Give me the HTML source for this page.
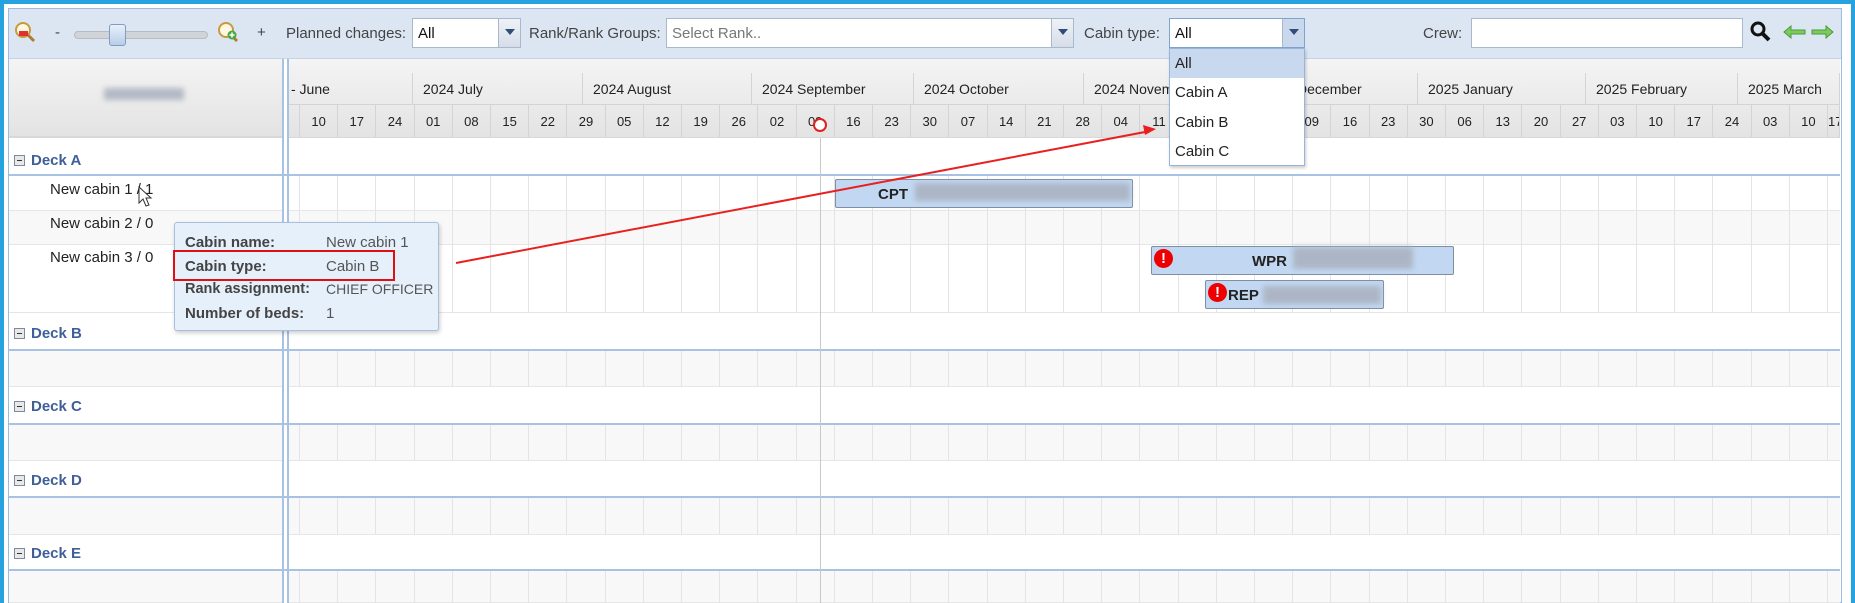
<!DOCTYPE html>
<html><head><meta charset="utf-8">
<style>
*{box-sizing:border-box;margin:0;padding:0}
body{width:1855px;height:603px;overflow:hidden;background:#fff;font-family:"Liberation Sans",sans-serif;font-size:14px;color:#333;position:relative}
.a{position:absolute}
#tb{left:9px;top:9px;width:1832px;height:50px;background:#dce6f3;border-bottom:1px solid #c5d3e6}
.lbl{position:absolute;top:25px;font-size:15px;color:#444}
.sel{position:absolute;height:30px;background:#fff;border:1px solid #a9b8cc}
.sel .arr{position:absolute;right:0;top:0;width:22px;height:100%;background:linear-gradient(#eef2f7,#d7dee8);border-left:1px solid #a9b8cc}
.sel .arr:after{content:"";position:absolute;left:6px;top:10px;border:5px solid transparent;border-top:6px solid #2e4d7b}
.sel span{position:absolute;left:5px;top:6px;font-size:15px;color:#111}
.hdr{background:linear-gradient(#f4f4f4,#e3e3e3)}
.cell{position:absolute;border-right:1px solid #d4d4d4;text-align:center;font-size:13px;color:#222}
.deck{position:absolute;left:9px;width:273px;font-weight:bold;color:#3e5f98;font-size:15px}
.deck i{display:inline-block;width:11px;height:11px;border:1px solid #7a8aa0;background:#e8e8e8;margin:0 6px 0 5px;vertical-align:-1px;position:relative}
.deck i:after{content:"";position:absolute;left:2px;top:4px;width:5px;height:1px;background:#333}
.bl{position:absolute;left:9px;width:1831px;height:2px;background:#a8c2e4}
.bar{position:absolute;background:#c2d8f2;border:1px solid #7f8fa3;border-radius:2px;font-weight:bold;font-size:15px;color:#222}
.blur{position:absolute;background:#a8b0be;filter:blur(3px);opacity:.85}
.ex{position:absolute;width:19px;height:19px;border-radius:50%;background:#e00;color:#fff;font-weight:bold;text-align:center;line-height:19px;font-size:15px}
.cab{position:absolute;left:50px;font-size:15px;color:#222}
.tt{position:absolute;font-size:15px;white-space:nowrap}
</style></head><body>
<div class="a" style="left:0;top:0;width:1855px;height:4px;background:#27a2e0"></div>
<div class="a" style="left:0;top:0;width:4px;height:603px;background:#27a2e0"></div>
<div class="a" style="left:1851px;top:0;width:4px;height:603px;background:#27a2e0"></div>
<div class="a" style="left:8px;top:8px;width:1834px;height:595px;border:1px solid #9bbbe0"></div>

<div id="tb" class="a"></div>
<svg class="a" style="left:14px;top:21px" width="24" height="24"><circle cx="9" cy="9" r="7" fill="#fff8e0" stroke="#c89a40" stroke-width="2"/><line x1="14" y1="14" x2="20" y2="20" stroke="#b07a30" stroke-width="3"/><rect x="5" y="10" width="9" height="5" fill="#e03030"/></svg>
<div class="lbl" style="left:55px;top:24px">-</div>
<div class="a" style="left:74px;top:31px;width:134px;height:8px;border-radius:4px;background:#d0d4d8;border:1px solid #b8bcc2"></div>
<div class="a" style="left:109px;top:24px;width:17px;height:22px;border-radius:3px;background:linear-gradient(#e8f0fb,#b9cde8);border:1px solid #7f9cc4"></div>
<svg class="a" style="left:217px;top:21px" width="24" height="24"><circle cx="9" cy="9" r="7" fill="#fff8e0" stroke="#c89a40" stroke-width="2"/><line x1="14" y1="14" x2="20" y2="20" stroke="#b07a30" stroke-width="3"/><circle cx="15" cy="14" r="4.5" fill="#4aa84a"/><path d="M12.5 14h5M15 11.5v5" stroke="#fff" stroke-width="1.5"/></svg>
<div class="lbl" style="left:257px;top:24px">+</div>
<div class="lbl" style="left:286px">Planned changes:</div>
<div class="sel" style="left:412px;top:18px;width:109px"><span>All</span><div class="arr"></div></div>
<div class="lbl" style="left:529px">Rank/Rank Groups:</div>
<div class="sel" style="left:666px;top:18px;width:408px"><span style="color:#777">Select Rank..</span><div class="arr"></div></div>
<div class="lbl" style="left:1084px">Cabin type:</div>
<div class="sel" style="left:1169px;top:18px;width:136px;border-color:#7fa3d0"><span>All</span><div class="arr" style="background:#c9d8ec"></div></div>
<div class="lbl" style="left:1423px">Crew:</div>
<div class="sel" style="left:1471px;top:18px;width:272px"></div>
<svg class="a" style="left:1750px;top:21px" width="22" height="22"><circle cx="8" cy="8" r="6" fill="none" stroke="#111" stroke-width="3"/><line x1="12" y1="12" x2="19" y2="19" stroke="#111" stroke-width="4"/></svg>
<svg class="a" style="left:1783px;top:25px" width="24" height="14"><path d="M1 7l7-6v4h14v4H8v4z" fill="#7ccc5c" stroke="#4a9a3a"/></svg>
<svg class="a" style="left:1810px;top:25px" width="24" height="14"><path d="M23 7l-7-6v4H2v4h14v4z" fill="#7ccc5c" stroke="#4a9a3a"/></svg>

<div class="a hdr" style="left:9px;top:59px;width:273px;height:79px;border-bottom:2px solid #d8d8d8"></div>
<div class="blur" style="left:104px;top:88px;width:80px;height:12px"></div>
<div class="a" style="left:282px;top:59px;width:7px;height:544px;background:#fff;border-left:2px solid #a8c2e4;border-right:2px solid #a8c2e4"></div>
<div class="a hdr" style="left:289px;top:59px;width:1551px;height:79px"></div>
<div id="g"></div>

<div class="deck" style="top:152px"><i></i>Deck A</div>
<div class="cab" style="top:181px">New cabin 1 / 1</div>
<div class="cab" style="top:215px">New cabin 2 / 0</div>
<div class="cab" style="top:249px">New cabin 3 / 0</div>
<svg class="a" style="left:137px;top:186px" width="16" height="22"><path d="M2 1v16l4-4 3 7 3-1-3-7h5z" fill="#fff" stroke="#333"/></svg>
<div class="deck" style="top:325px"><i></i>Deck B</div>
<div class="deck" style="top:398px"><i></i>Deck C</div>
<div class="deck" style="top:472px"><i></i>Deck D</div>
<div class="deck" style="top:545px"><i></i>Deck E</div>

<div class="bar" style="left:835px;top:179px;width:298px;height:29px"><span class="a" style="left:42px;top:6px">CPT</span></div>
<div class="blur" style="left:915px;top:183px;width:215px;height:18px"></div>
<div class="bar" style="left:1151px;top:246px;width:303px;height:29px"><span class="a" style="left:100px;top:6px">WPR</span></div>
<div class="blur" style="left:1293px;top:247px;width:120px;height:22px"></div>
<div class="ex" style="left:1154px;top:249px">!</div>
<div class="bar" style="left:1205px;top:280px;width:179px;height:29px"><span class="a" style="left:22px;top:6px">REP</span></div>
<div class="blur" style="left:1263px;top:286px;width:118px;height:18px"></div>
<div class="ex" style="left:1208px;top:283px">!</div>

<div class="a" style="left:174px;top:222px;width:265px;height:109px;background:#e6f0fb;border:1px solid #a9c0dc;border-radius:3px;box-shadow:1px 2px 4px rgba(0,0,0,.2)">
<div class="tt" style="left:10px;top:11px;font-weight:bold;color:#444">Cabin name:</div><div class="tt" style="left:151px;top:11px;color:#555">New cabin 1</div>
<div class="tt" style="left:10px;top:35px;font-weight:bold;color:#444">Cabin type:</div><div class="tt" style="left:151px;top:35px;color:#555">Cabin B</div>
<div class="tt" style="left:10px;top:58px;font-weight:bold;color:#444;font-size:14.5px">Rank assignment:</div><div class="tt" style="left:151px;top:58px;color:#555;font-size:14px">CHIEF OFFICER</div>
<div class="tt" style="left:10px;top:82px;font-weight:bold;color:#444">Number of beds:</div><div class="tt" style="left:151px;top:82px;color:#555">1</div>
</div>
<div class="a" style="left:173px;top:250px;width:222px;height:31px;border:2px solid #e01010"></div>
<svg class="a" style="left:0;top:0;pointer-events:none" width="1855" height="603"><line x1="456" y1="263" x2="1145" y2="132" stroke="#e82020" stroke-width="2"/><path d="M1156 129l-13-4 2 10z" fill="#e82020"/><circle cx="820" cy="125" r="6" fill="#fff" stroke="#e02020" stroke-width="2"/></svg>

<div class="a" style="left:1169px;top:48px;width:136px;height:118px;background:#fff;border:1px solid #98b4d8;box-shadow:1px 2px 3px rgba(0,0,0,.2);font-size:15px;color:#222">
<div style="height:29px;background:#c8d9ef;padding:6px 5px">All</div>
<div style="height:30px;padding:6px 5px">Cabin A</div>
<div style="height:29px;padding:6px 5px">Cabin B</div>
<div style="height:29px;padding:6px 5px">Cabin C</div>
</div>

<script>
var g=document.getElementById('g'),h='';
var wk=['10','17','24','01','08','15','22','29','05','12','19','26','02','09','16','23','30','07','14','21','28','04','11','18','25','02','09','16','23','30','06','13','20','27','03','10','17','24','03','10','17'];
var W=38.2,X0=300;
var mb=[289,413,583,752,914,1084,1252,1418,1586,1738,1840],mn=['- June','2024 July','2024 August','2024 September','2024 October','2024 November','2024 December','2025 January','2025 February','2025 March'];
for(var i=0;i<mn.length;i++){h+='<div class="cell" style="left:'+mb[i]+'px;top:73px;width:'+(mb[i+1]-mb[i])+'px;height:32px;border-bottom:1px solid #d4d4d4;text-align:left;padding:8px 0 0 '+(i==0?2:10)+'px;font-size:14px;white-space:nowrap;overflow:hidden">'+mn[i]+'</div>';}
h+='<div class="cell" style="left:289px;top:105px;width:11px;height:33px"></div>';
var rows=[[176,211,'#fff'],[211,245,'#f8f8f8'],[245,313,'#fff'],[351,387,'#f8f8f8'],[425,461,'#f8f8f8'],[498,535,'#f8f8f8'],[571,603,'#f8f8f8']];
for(var r=0;r<rows.length;r++){h+='<div class="a" style="left:289px;top:'+rows[r][0]+'px;width:1551px;height:'+(rows[r][1]-rows[r][0])+'px;background:'+rows[r][2]+';border-bottom:1px solid #e6e6e6"></div>';
 h+='<div class="a" style="left:9px;top:'+rows[r][0]+'px;width:273px;height:'+(rows[r][1]-rows[r][0])+'px;background:'+rows[r][2]+';border-bottom:1px solid #e6e6e6"></div>';}
for(var i=0;i<wk.length;i++){var x=X0+i*W;if(x>1840)break;var w=Math.min(W,1840-x);
 h+='<div class="cell" style="left:'+x+'px;top:105px;width:'+w+'px;height:33px;padding-top:9px;overflow:hidden">'+wk[i]+'</div>';
 for(var r=0;r<rows.length;r++)h+='<div class="a" style="left:'+(x-1)+'px;top:'+rows[r][0]+'px;width:1px;height:'+(rows[r][1]-rows[r][0])+'px;background:#e4e4e4"></div>';}
h+='<div class="a" style="left:289px;top:137px;width:1551px;height:1px;background:#d8d8d8"></div>';
var dl=[176,351,425,498,571];for(var i=0;i<dl.length;i++)h+='<div class="bl" style="top:'+(dl[i]-2)+'px"></div>';
h+='<div class="a" style="left:820px;top:138px;width:1px;height:465px;background:#c8c8c8"></div>';
g.innerHTML=h;
</script>
</body></html>
